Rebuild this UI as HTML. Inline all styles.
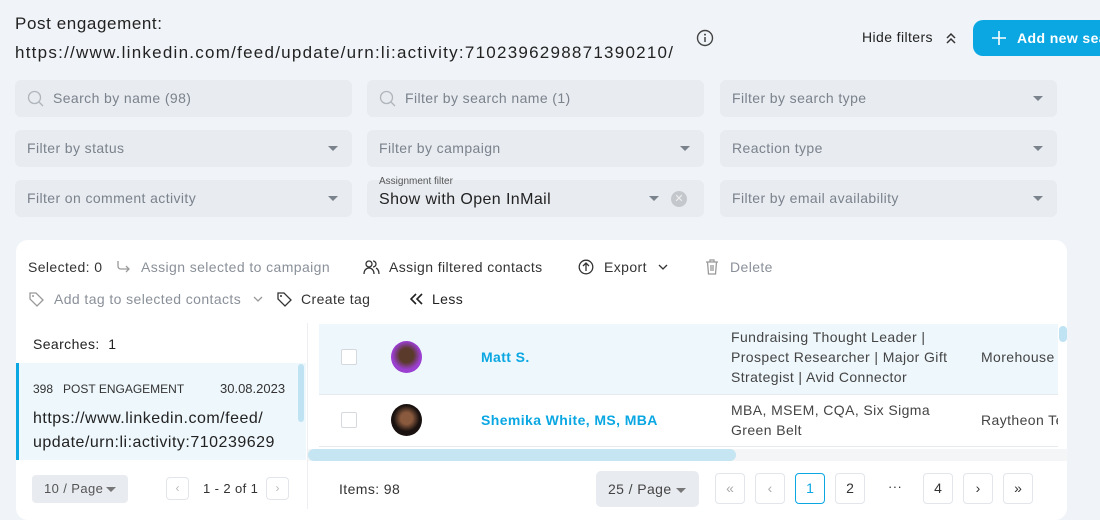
<!DOCTYPE html>
<html><head><style>
*{box-sizing:border-box;margin:0;padding:0}
body{width:1100px;height:509px;overflow:hidden;background:#f0f4f8;font-family:"Liberation Sans",sans-serif;position:relative;color:#222;letter-spacing:0.4px}
.a{position:absolute;white-space:nowrap}
.f{position:absolute;background:#e8ebf0;border-radius:6px;height:37px;font-size:14px;color:#7a828c;padding:0 12px;line-height:37px}
.car{position:absolute;right:14px;top:16px;width:0;height:0;border-left:5px solid transparent;border-right:5px solid transparent;border-top:5px solid #7a828c}
.g{color:#8a9099}
.pb{position:absolute;width:30px;height:31px;border:1px solid #e2e5ea;border-radius:4px;background:#fff;text-align:center;line-height:29px;font-size:14px;color:#333;letter-spacing:0}
</style></head><body>
<div class="a" style="left:15px;top:14px;font-size:17px;letter-spacing:0.6px">Post engagement:</div>
<div class="a" style="left:15px;top:43px;font-size:17px;letter-spacing:1.25px">https://www.linkedin.com/feed/update/urn:li:activity:7102396298871390210/</div>
<svg class="a" style="left:696px;top:29px" width="18" height="18" viewBox="0 0 18 18"><circle cx="9" cy="9" r="7.5" fill="none" stroke="#444" stroke-width="1.4"/><circle cx="9" cy="5.6" r="1" fill="#444"/><path d="M9 8v5" stroke="#444" stroke-width="1.5"/></svg>
<div class="a" style="left:862px;top:29px;font-size:14px;color:#222">Hide filters</div>
<svg class="a" style="left:945px;top:31px" width="12" height="14" viewBox="0 0 12 14"><path d="M2 7l4-4 4 4M2 12l4-4 4 4" fill="none" stroke="#333" stroke-width="1.5"/></svg>
<div class="a" style="left:973px;top:20px;width:140px;height:36px;background:#0aa7e2;border-radius:10px;color:#fff;font-size:14px;font-weight:bold;line-height:36px;padding-left:44px">Add new search</div>
<svg class="a" style="left:991px;top:30px" width="16" height="16"><path d="M8 1v14M1 8h14" stroke="#fff" stroke-width="1.6"/></svg>

<div class="f" style="left:15px;top:80px;width:337px;padding-left:38px">Search by name (98)</div>
<div class="f" style="left:367px;top:80px;width:337px;padding-left:38px">Filter by search name (1)</div>
<svg class="a" style="left:27px;top:90px" width="17" height="17"><circle cx="7.5" cy="7.5" r="6" fill="none" stroke="#b0b5bb" stroke-width="1.3"/><path d="M12 12l4 4" stroke="#b0b5bb" stroke-width="1.3"/></svg>
<svg class="a" style="left:379px;top:90px" width="17" height="17"><circle cx="7.5" cy="7.5" r="6" fill="none" stroke="#b0b5bb" stroke-width="1.3"/><path d="M12 12l4 4" stroke="#b0b5bb" stroke-width="1.3"/></svg>
<div class="f" style="left:720px;top:80px;width:337px">Filter by search type<i class="car"></i></div>
<div class="f" style="left:15px;top:130px;width:337px">Filter by status<i class="car"></i></div>
<div class="f" style="left:367px;top:130px;width:337px">Filter by campaign<i class="car"></i></div>
<div class="f" style="left:720px;top:130px;width:337px">Reaction type<i class="car"></i></div>
<div class="f" style="left:15px;top:180px;width:337px">Filter on comment activity<i class="car"></i></div>
<div class="f" style="left:367px;top:180px;width:337px"><span class="a" style="left:12px;top:-4px;font-size:10px;line-height:12px;color:#555;letter-spacing:0">Assignment filter</span><span class="a" style="left:12px;top:10px;font-size:16px;line-height:20px;color:#222">Show with Open InMail</span><i class="car" style="right:45px"></i><span class="a" style="right:17px;top:11px;width:16px;height:16px;border-radius:50%;background:#c4c8cd;color:#eee;font-size:11px;line-height:16px;text-align:center;letter-spacing:0">✕</span></div>
<div class="f" style="left:720px;top:180px;width:337px">Filter by email availability<i class="car"></i></div>

<div class="a" style="left:16px;top:240px;width:1051px;height:280px;background:#fff;border-radius:12px"></div>
<div class="a" style="left:28px;top:259px;font-size:14px;color:#333">Selected: 0</div>
<svg class="a" style="left:116px;top:260px" width="15" height="14"><path d="M2 1v5c0 2 1 3 3 3h8M10 6l3 3-3 3" fill="none" stroke="#999" stroke-width="1.3"/></svg>
<div class="a g" style="left:141px;top:259px;font-size:14px">Assign selected to campaign</div>
<svg class="a" style="left:363px;top:259px" width="17" height="16"><circle cx="6" cy="5" r="3" fill="none" stroke="#333" stroke-width="1.3"/><path d="M1 15c0-4 2.5-6 5-6s5 2 5 6M10 2a3 3 0 010 6M13 9c2 1 3 3 3 6" fill="none" stroke="#333" stroke-width="1.3"/></svg>
<div class="a" style="left:389px;top:259px;font-size:14px;color:#333">Assign filtered contacts</div>
<svg class="a" style="left:578px;top:259px" width="16" height="16"><circle cx="8" cy="8" r="6.8" fill="none" stroke="#333" stroke-width="1.3"/><path d="M8 12V4M5 7l3-3 3 3" fill="none" stroke="#333" stroke-width="1.3"/></svg>
<div class="a" style="left:604px;top:259px;font-size:14px;color:#333">Export</div>
<svg class="a" style="left:658px;top:263px" width="10" height="8"><path d="M1 2l4 4 4-4" fill="none" stroke="#333" stroke-width="1.3"/></svg>
<svg class="a" style="left:705px;top:259px" width="14" height="16"><path d="M1 3h12M5 3V1h4v2M2.5 3l1 12h7l1-12M6 6v6M8 6v6" fill="none" stroke="#999" stroke-width="1.3"/></svg>
<div class="a g" style="left:730px;top:259px;font-size:14px">Delete</div>
<svg class="a" style="left:28px;top:291px" width="16" height="16"><path d="M2 2h6l7 7-6 6-7-7z" fill="none" stroke="#999" stroke-width="1.3"/><circle cx="5" cy="5" r="1" fill="#999"/></svg>
<div class="a g" style="left:54px;top:291px;font-size:14px">Add tag to selected contacts</div>
<svg class="a" style="left:253px;top:295px" width="10" height="8"><path d="M1 2l4 4 4-4" fill="none" stroke="#999" stroke-width="1.3"/></svg>
<svg class="a" style="left:276px;top:291px" width="16" height="16"><path d="M2 2h6l7 7-6 6-7-7z" fill="none" stroke="#333" stroke-width="1.3"/><circle cx="5" cy="5" r="1" fill="#333"/></svg>
<div class="a" style="left:301px;top:291px;font-size:14px;color:#333">Create tag</div>
<svg class="a" style="left:410px;top:293px" width="14" height="12"><path d="M6 1L1 6l5 5M12 1L7 6l5 5" fill="none" stroke="#222" stroke-width="1.6"/></svg>
<div class="a" style="left:432px;top:291px;font-size:14px;color:#222">Less</div>

<div class="a" style="left:307px;top:323px;width:1px;height:186px;background:#eceef1"></div>
<div class="a" style="left:33px;top:336px;font-size:14px;color:#222">Searches:&nbsp; 1</div>
<div class="a" style="left:16px;top:363px;width:290px;height:97px;background:#eef7fc;border-left:3px solid #0aa7e2"></div>
<div class="a" style="left:298px;top:364px;width:6px;height:58px;background:#bfe3f3;border-radius:3px"></div>
<div class="a" style="left:33px;top:382px;font-size:12px;color:#333;letter-spacing:0">398 &nbsp; POST ENGAGEMENT</div>
<div class="a" style="left:220px;top:381px;font-size:13px;color:#333;letter-spacing:0">30.08.2023</div>
<div class="a" style="left:33px;top:407px;font-size:16px;color:#222;line-height:24px;letter-spacing:0.5px">https://www.linkedin.com/feed/<br>update/urn:li:activity:710239629</div>
<div class="a" style="left:16px;top:460px;width:290px;height:49px;background:#fff"></div>
<div class="a" style="left:32px;top:475px;width:96px;height:28px;background:#e8ebf0;border-radius:4px;font-size:13px;color:#555;line-height:28px;padding-left:12px">10 / Page</div>
<i class="a" style="left:106px;top:487px;border-left:5px solid transparent;border-right:5px solid transparent;border-top:5px solid #777"></i>
<div class="pb" style="left:166px;top:477px;width:23px;height:23px;line-height:21px;color:#bbb;font-size:12px">‹</div>
<div class="a" style="left:203px;top:481px;font-size:13px;color:#333">1 - 2 of 1</div>
<div class="pb" style="left:266px;top:477px;width:23px;height:23px;line-height:21px;color:#bbb;font-size:12px">›</div>

<div class="a" style="left:319px;top:324px;width:739px;height:70px;background:#eef7fc"></div>
<div class="a" style="left:319px;top:394px;width:739px;height:1px;background:#e6eaee"></div>
<div class="a" style="left:319px;top:446px;width:739px;height:1px;background:#e6eaee"></div>
<div class="a" style="left:1059px;top:326px;width:8px;height:16px;background:#bfe3f3;border-radius:4px"></div>
<div class="a" style="left:341px;top:349px;width:16px;height:16px;border:1px solid #d5d9de;border-radius:2px;background:#fff"></div>
<div class="a" style="left:341px;top:412px;width:16px;height:16px;border:1px solid #d5d9de;border-radius:2px;background:#fff"></div>
<div class="a" style="left:391px;top:341px;width:31px;height:32px;border-radius:50%;background:radial-gradient(circle at 50% 45%,#5a3a2a 30%,#9b3fd0 60%)"></div>
<div class="a" style="left:391px;top:404px;width:31px;height:32px;border-radius:50%;background:radial-gradient(circle at 50% 45%,#8a5a3e 25%,#1a1210 55%)"></div>
<div class="a" style="left:481px;top:349px;font-size:14px;font-weight:bold;color:#0aa7e2">Matt S.</div>
<div class="a" style="left:481px;top:412px;font-size:14px;font-weight:bold;color:#0aa7e2">Shemika White, MS, MBA</div>
<div class="a" style="left:731px;top:327px;font-size:14px;color:#444;line-height:20px">Fundraising Thought Leader |<br>Prospect Researcher | Major Gift<br>Strategist | Avid Connector</div>
<div class="a" style="left:731px;top:400px;font-size:14px;color:#444;line-height:20px">MBA, MSEM, CQA, Six Sigma<br>Green Belt</div>
<div class="a" style="left:981px;top:349px;font-size:14px;color:#444;width:77px;overflow:hidden">Morehouse</div>
<div class="a" style="left:981px;top:412px;font-size:14px;color:#444;width:77px;overflow:hidden">Raytheon Technologies</div>
<div class="a" style="left:308px;top:449px;width:759px;height:12px;background:#f3f5f7"></div>
<div class="a" style="left:308px;top:449px;width:428px;height:12px;background:#c5e5f2;border-radius:6px"></div>

<div class="a" style="left:339px;top:481px;font-size:14px;color:#333">Items: 98</div>
<div class="a" style="left:596px;top:471px;width:103px;height:36px;background:#e8ebf0;border-radius:5px;font-size:14px;color:#444;line-height:36px;padding-left:12px">25 / Page</div>
<i class="a" style="left:676px;top:488px;border-left:5px solid transparent;border-right:5px solid transparent;border-top:5px solid #777"></i>
<div class="pb" style="left:715px;top:473px;color:#aaa">«</div>
<div class="pb" style="left:755px;top:473px;color:#aaa">‹</div>
<div class="pb" style="left:795px;top:473px;border-color:#0aa7e2;color:#0aa7e2">1</div>
<div class="pb" style="left:835px;top:473px">2</div>
<div class="a" style="left:888px;top:479px;font-size:13px;color:#333">···</div>
<div class="pb" style="left:923px;top:473px">4</div>
<div class="pb" style="left:963px;top:473px">›</div>
<div class="pb" style="left:1003px;top:473px">»</div>
</body></html>
